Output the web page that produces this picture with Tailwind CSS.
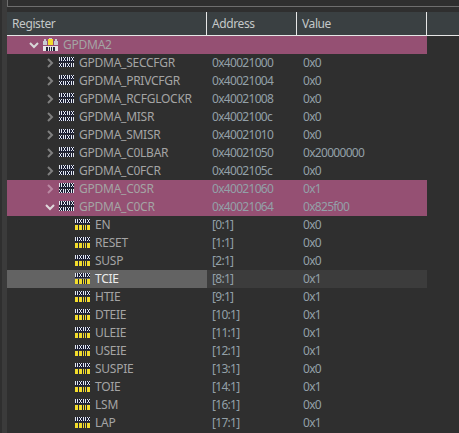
<!doctype html>
<html>
<head>
<meta charset="utf-8">
<script src="https://cdn.jsdelivr.net/npm/@tailwindcss/browser@4"></script>
</head>
<body class="w-[459px] h-[433px] overflow-hidden bg-[#2f2f2f] font-['Noto_Sans',sans-serif] text-[12px] text-[#a4a4a4]">

<template id="template[reg-icon]">
  <svg width="15" height="12" viewBox="0 1 15 12" class="shrink-0" shape-rendering="crispEdges">
    <path d="M0 1h15v10H0z" fill="#1c2036"/>
    <g fill="#e4e8f0">
      <path d="M0 1h1v4H0zM2 1h1v4H2zM4 1h1v1H4zM6 1h1v1H6zM5 2h1v2H5zM4 4h1v1H4zM6 4h1v1H6zM8 1h1v4H8zM10 1h1v4h-1zM12 1h1v1h-1zM14 1h1v1h-1zM13 2h1v2h-1zM12 4h1v1h-1zM14 4h1v1h-1z"/>
      <path d="M0 7h1v1H0zM2 7h1v1H2zM1 8h1v2H1zM0 10h1v1H0zM2 10h1v1H2zM4 7h1v4H4zM6 7h1v4H6zM8 7h1v1H8zM10 7h1v1h-1zM9 8h1v2H9zM8 10h1v1H8zM10 10h1v1h-1zM12 7h1v4h-1zM14 7h1v4h-1z"/>
    </g>
    <path d="M0 6h15v1H0z" fill="#2f2f2f" fill-opacity="0.6"/>
  </svg>
</template>

<template id="template[field-icon]">
  <svg width="15" height="12" viewBox="0 1 15 12" class="shrink-0" shape-rendering="crispEdges">
    <path d="M0 1h15v5H0z" fill="#1c2036"/>
    <g fill="#e4e8f0">
      <path d="M0 1h1v4H0zM2 1h1v4H2zM4 1h1v1H4zM6 1h1v1H6zM5 2h1v2H5zM4 4h1v1H4zM6 4h1v1H6zM8 1h1v4H8zM10 1h1v4h-1zM12 1h1v1h-1zM14 1h1v1h-1zM13 2h1v2h-1zM12 4h1v1h-1zM14 4h1v1h-1z"/>
    </g>
    <path d="M0 7h15v5H0z" fill="#24263a"/>
    <path d="M0 7h3v5H0zM4 7h3v5H4zM8 7h1v5H8zM10 7h1v5h-1zM12 7h3v5h-3z" fill="#f2dc2c"/>
  </svg>
</template>

<div class="flex h-[12px]">
  <div class="w-[7px] shrink-0 pl-[2px]"><div class="h-full bg-[#3b3b3b]"></div></div>
  <div class="flex-1 h-[7px] border-l border-b border-[#6e6e6e]"></div>
</div>

<div class="flex">
  <div class="w-[7px] shrink-0 pl-[2px] h-[421px]"><div class="h-full bg-[#3b3b3b]"></div></div>
  <div class="flex-1 min-w-0">
    <div class="flex h-[24px] bg-[#3a4042] border-b border-[#e6e6e6] text-[#c4c8c8] tracking-[-0.4px]">
      <div class="w-[200px] pl-[5px] flex items-center border-r border-[#e6e6e6]">Register</div>
      <div class="w-[90px] pl-[5px] flex items-center border-r border-[#e6e6e6]">Address</div>
      <div class="w-[130px] pl-[5px] flex items-center border-r border-[#e6e6e6]">Value</div>
      <div class="flex-1"></div>
    </div>
    <div id="rows"></div>
  </div>
</div>

<script type="module">
const rows = [
  { name: 'GPDMA2', kind: 'periph', open: true, hl: true },
  { name: 'GPDMA_SECCFGR', addr: '0x40021000', value: '0x0' },
  { name: 'GPDMA_PRIVCFGR', addr: '0x40021004', value: '0x0' },
  { name: 'GPDMA_RCFGLOCKR', addr: '0x40021008', value: '0x0' },
  { name: 'GPDMA_MISR', addr: '0x4002100c', value: '0x0' },
  { name: 'GPDMA_SMISR', addr: '0x40021010', value: '0x0' },
  { name: 'GPDMA_C0LBAR', addr: '0x40021050', value: '0x20000000' },
  { name: 'GPDMA_C0FCR', addr: '0x4002105c', value: '0x0' },
  { name: 'GPDMA_C0SR', addr: '0x40021060', value: '0x1', hl: true },
  { name: 'GPDMA_C0CR', addr: '0x40021064', value: '0x825f00', hl: true, open: true },
  { name: 'EN', kind: 'field', addr: '[0:1]', value: '0x0' },
  { name: 'RESET', kind: 'field', addr: '[1:1]', value: '0x0' },
  { name: 'SUSP', kind: 'field', addr: '[2:1]', value: '0x0' },
  { name: 'TCIE', kind: 'field', addr: '[8:1]', value: '0x1', sel: true },
  { name: 'HTIE', kind: 'field', addr: '[9:1]', value: '0x1' },
  { name: 'DTEIE', kind: 'field', addr: '[10:1]', value: '0x1' },
  { name: 'ULEIE', kind: 'field', addr: '[11:1]', value: '0x1' },
  { name: 'USEIE', kind: 'field', addr: '[12:1]', value: '0x1' },
  { name: 'SUSPIE', kind: 'field', addr: '[13:1]', value: '0x0' },
  { name: 'TOIE', kind: 'field', addr: '[14:1]', value: '0x1' },
  { name: 'LSM', kind: 'field', addr: '[16:1]', value: '0x0' },
  { name: 'LAP', kind: 'field', addr: '[17:1]', value: '0x1' },
]
const periphIcon = `<svg width="15" height="14" viewBox="0 0 15 14" class="shrink-0" shape-rendering="crispEdges">
  <path d="M0 3h4v4H0zM11 3h4v4h-4z" fill="#c8ccd4"/><path d="M5 1h5v6H5z" fill="#f2dc2c"/>
  <path d="M1 1h2v2H1zM12 1h2v2h-2zM6 0h3v1H6z" fill="#c8ccd4"/>
  <path d="M0 8h15v1H0z" fill="#e8e8e8"/>
  <path d="M0 9h15v4H0z" fill="#24263a"/>
  <path d="M0 9h3v4H0zM5 9h1v4H5zM7 9h1v4H7zM9 9h1v4H9zM12 9h3v4h-3z" fill="#e8e8e8"/>
</svg>`
const chevron = (open, color) => open
  ? `<svg width="10" height="10" viewBox="0 0 10 10"><path d="M1 3l4 4 4-4" fill="none" stroke="${color}" stroke-width="2"/></svg>`
  : `<svg width="10" height="10" viewBox="0 0 10 10"><path d="M3 1l4 4-4 4" fill="none" stroke="${color}" stroke-width="2"/></svg>`

const host = document.getElementById('rows')
for (const r of rows) {
  const row = document.createElement('div')
  row.className = 'flex items-center h-[18px] w-[420px] whitespace-nowrap'
  if (r.hl) row.classList.add('bg-[#955073]')
  let head = ''
  const color = r.hl ? (r.open ? '#e0d8dc' : '#b98aa3') : '#808080'
  if (r.kind === 'periph') head = `<span class="ml-[22px] mr-[4px] flex">${chevron(true, '#d8d8d8')}</span><span class="mr-[5px] flex">${periphIcon}</span>`
  else if (r.kind === 'field') head = `<span class="ml-[68px] mr-[5px] flex">${document.getElementById('template[field-icon]').innerHTML}</span>`
  else head = `<span class="ml-[38px] mr-[4px] flex">${chevron(r.open, color)}</span><span class="mr-[5px] flex">${document.getElementById('template[reg-icon]').innerHTML}</span>`
  row.innerHTML = `<div class="w-[200px] flex items-center shrink-0 h-full">${head}<span class="tracking-[-0.25px]">${r.name}</span></div>
    <div class="w-[91px] pl-[5px] shrink-0 text-[#93a0a8] tracking-[-0.7px]">${r.addr || ''}</div>
    <div class="pl-[5px] text-[#93a0a8] tracking-[-0.7px]">${r.value || ''}</div>`
  if (r.sel) {
    row.classList.add('bg-[#3c3c3c]')
    row.firstElementChild.classList.add('bg-[#636363]', 'text-[#ececec]')
  }
  host.append(row)
}
</script>
</body>
</html>
